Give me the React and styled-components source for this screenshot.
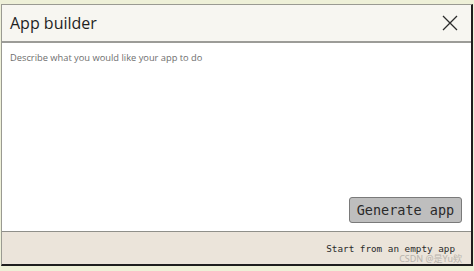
import React from "react";
import styled, { createGlobalStyle } from "styled-components";

const Global = createGlobalStyle`
	html, body { margin: 0; padding: 0; }
	body { background: #eef0d8; }
`;

const App = () => {
	return (
		<Page>
			<Global />
			<Dialog>
				<Header>
					<Title>App builder</Title>
					<Close aria-label="close">
						<svg width="16" height="16" viewBox="0 0 16 16">
							<path d="M1 1 L15 15 M15 1 L1 15" stroke="#2b2b2b" strokeWidth="1.3" fill="none" />
						</svg>
					</Close>
				</Header>
				<Body>
					<Hint>Describe what you would like your app to do</Hint>
					<Actions>
						<GenerateButton>Generate app</GenerateButton>
					</Actions>
				</Body>
				<Footer>
					<EmptyLink>Start from an empty app</EmptyLink>
					<Mark>CSDN @是Yu欸</Mark>
				</Footer>
			</Dialog>
		</Page>
	);
};

export default App;

const Page = styled.div`
	height: 271px;
	box-sizing: border-box;
	padding: 4px 1px 5px 1px;
	display: flex;
`;

const Dialog = styled.div`
	flex: 1;
	display: flex;
	flex-direction: column;
	background: #fff;
	border-top: 1px solid #9a9a92;
	border-left: 1px solid #9a9a92;
	border-right: 2px solid #1e1e1e;
	border-bottom: 2px solid #1e1e1e;
`;

const Header = styled.div`
	height: 36px;
	display: flex;
	align-items: center;
	justify-content: space-between;
	padding: 0 13px 0 8px;
	background: #f7f6f1;
	border-bottom: 2px solid #9c9c98;
`;

const Title = styled.h1`
	margin: 0;
	font-family: "Open Sans", sans-serif;
	font-weight: 400;
	font-size: 16px;
	color: #1f1f1f;
`;

const Close = styled.div`
	display: flex;
	align-items: center;
`;

const Body = styled.div`
	flex: 1;
	display: flex;
	flex-direction: column;
	padding: 8px 9px 8px 8px;
`;

const Hint = styled.div`
	font-family: "Open Sans", sans-serif;
	font-size: 9.3px;
	color: #6e6e6e;
`;

const Actions = styled.div`
	margin-top: auto;
	display: flex;
	justify-content: flex-end;
`;

const GenerateButton = styled.button`
	width: 113px;
	height: 26px;
	background: #bebebe;
	border: 1px solid #7a7a7a;
	border-radius: 3px;
	font-family: "DejaVu Sans Mono", monospace;
	font-size: 13.5px;
	color: #2a2a2a;
	padding: 0;
`;

const Footer = styled.div`
	height: 33px;
	box-sizing: border-box;
	position: relative;
	display: flex;
	align-items: center;
	justify-content: flex-end;
	padding: 0 16px 0 0;
	background: #ebe4da;
	border-top: 1px solid #8f8f8a;
`;

const EmptyLink = styled.span`
	font-family: "DejaVu Sans Mono", monospace;
	font-size: 9.3px;
	color: #2a2a2a;
`;

const Mark = styled.span`
	position: absolute;
	right: 9px;
	bottom: -1px;
	font-family: "Noto Sans", "Noto Sans CJK SC", sans-serif;
	font-size: 9px;
	color: #b9b4ad;
`;
